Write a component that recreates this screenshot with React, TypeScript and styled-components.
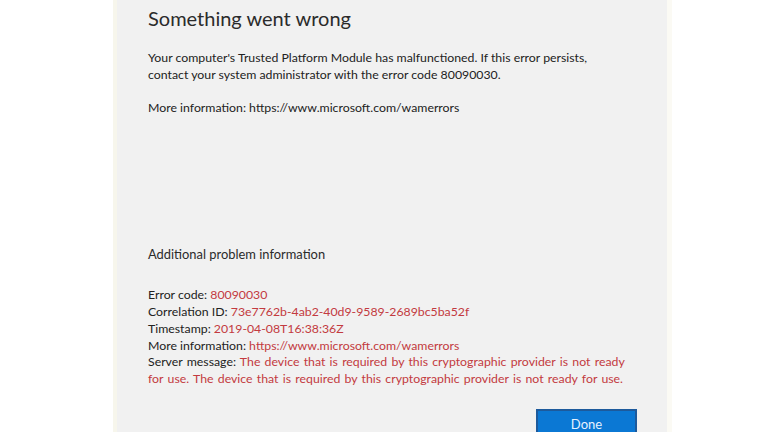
import React from "react";
import styled, { createGlobalStyle } from "styled-components";

const Global = createGlobalStyle`
  html, body { margin: 0; padding: 0; background: #ffffff; }
  body { font-family: Lato, "Noto Sans", sans-serif; }
`;

const Page = styled.div`
  width: 768px;
  height: 432px;
  overflow: hidden;
  display: flex;
  justify-content: flex-start;
  padding-left: 113px;
  box-sizing: border-box;
  background: #ffffff;
`;

const Dialog = styled.div`
  width: 559px;
  height: 432px;
  background: #f1f1f1;
  box-sizing: border-box;
  padding: 4px 30px 0 31px;
  display: flex;
  flex-direction: column;
  border-left: 4px solid #f7f6ec;
  border-right: 5px solid #fbfaf4;
  color: #222;
  white-space: nowrap;
`;

const Title = styled.h1`
  margin: 0;
  font-weight: 400;
  font-size: 20px;
  line-height: 28px;
  color: #2b2b2b;
`;

const Para = styled.p<{ $top: number }>`
  margin: ${(p) => p.$top}px 0 0 0;
  font-size: 12.3px;
  line-height: 16.7px;
`;

const Sub = styled.h2`
  margin: 128px 0 0 0;
  font-weight: 400;
  font-size: 12.9px;
  line-height: 18px;
  color: #2b2b2b;
`;

const Details = styled.div`
  margin-top: 24px;
  font-size: 12.3px;
  line-height: 16.8px;
`;

const Row = styled.div<{ $spaced?: boolean }>`
  word-spacing: ${(p) => (p.$spaced ? "1.1px" : "0")};
`;

const Red = styled.span`
  color: #c33a40;
`;

const Footer = styled.div`
  display: flex;
  justify-content: flex-end;
  margin-top: 21px;
`;

const Button = styled.button`
  width: 101px;
  height: 30px;
  background: #0b78d4;
  border: 2px solid #1d5a9c;
  color: #e6f1ff;
  font-family: inherit;
  font-size: 13px;
  padding: 0;
`;

export default function App() {
  return (
    <>
      <Global />
      <Page>
        <Dialog>
          <Title>Something went wrong</Title>
          <Para $top={18}>
            Your computer's Trusted Platform Module has malfunctioned. If this error persists,
            <br />
            contact your system administrator with the error code 80090030.
          </Para>
          <Para $top={17}>More information: https://www.microsoft.com/wamerrors</Para>
          <Sub>Additional problem information</Sub>
          <Details>
            <Row>
              Error code: <Red>80090030</Red>
            </Row>
            <Row>
              Correlation ID: <Red>73e7762b-4ab2-40d9-9589-2689bc5ba52f</Red>
            </Row>
            <Row>
              Timestamp: <Red>2019-04-08T16:38:36Z</Red>
            </Row>
            <Row>
              More information: <Red>https://www.microsoft.com/wamerrors</Red>
            </Row>
            <Row $spaced>
              Server message:{" "}
              <Red>
                The device that is required by this cryptographic provider is not ready
                <br />
                for use. The device that is required by this cryptographic provider is not ready for use.
              </Red>
            </Row>
          </Details>
          <Footer>
            <Button>Done</Button>
          </Footer>
        </Dialog>
      </Page>
    </>
  );
}
